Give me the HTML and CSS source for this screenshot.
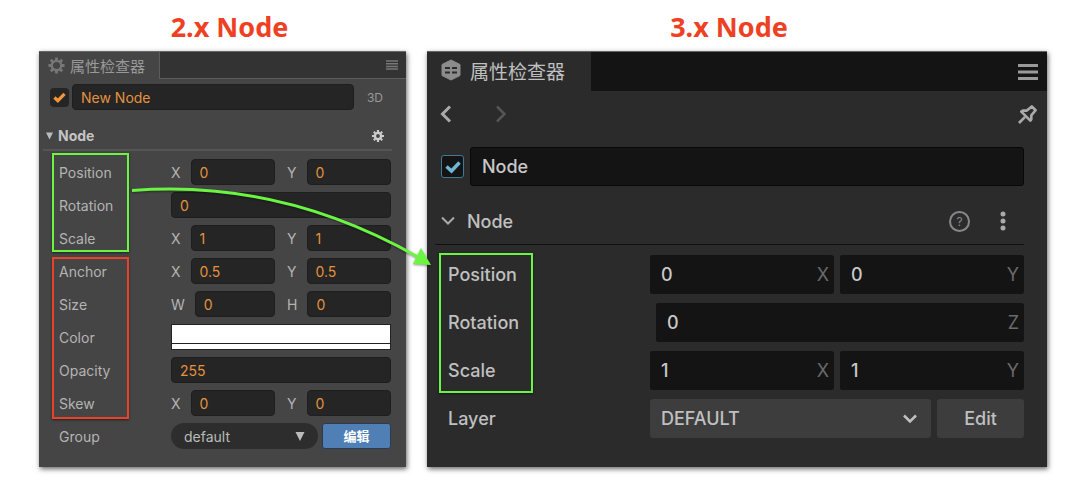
FILE: index.html
```html
<!DOCTYPE html>
<html lang="zh-CN">
<head>
  <meta charset="UTF-8">
  <meta name="viewport" content="width=device-width, initial-scale=1.0">
  <title>2.x Node / 3.x Node</title>
  <link rel="stylesheet" href="styles.css">
</head>
<body>
  <main class="compare">

    <!-- 2.x inspector -->
    <section class="column column-old">
      <h2 class="title">2.x Node</h2>
      <div class="panel panel-old">
        <div class="tab-bar">
          <div class="tab">
            <svg class="tab-icon" viewBox="0 0 18 18" fill="none" stroke="currentColor">
              <circle cx="9" cy="9" r="5" stroke-width="2.4"/>
              <path d="M9 .5v3M9 14.5v3M.5 9h3M14.5 9h3M3 3l2.100 2.100M12.900 12.900L15 15M3 15l2.100-2.100M12.900 5.100L15 3" stroke-width="3"/>
            </svg>
            <span>属性检查器</span>
          </div>
          <button class="icon-btn menu-btn" aria-label="Menu">
            <svg viewBox="0 0 12 10" fill="none" stroke="currentColor" stroke-width="1.500"><path d="M0 1h12M0 3.700h12M0 6.400h12M0 9.100h12"/></svg>
          </button>
        </div>

        <div class="name-row">
          <span class="check">
            <input type="checkbox" checked aria-label="Active">
            <svg viewBox="0 0 14 12" fill="none" stroke="currentColor" stroke-width="3.500"><path d="M1.500 6l3.700 3.500L12.500 2"/></svg>
          </span>
          <input class="field name-field" type="text" value="New Node" aria-label="Name">
          <button class="mode-btn">3D</button>
        </div>

        <div class="section-head">
          <svg class="fold" viewBox="0 0 8 8" fill="currentColor"><path d="M0 0h8L4 8z"/></svg>
          <h3>Node</h3>
          <button class="icon-btn" aria-label="Settings">
            <svg viewBox="0 0 12 12" fill="none" stroke="currentColor">
              <circle cx="6" cy="6" r="3.100" stroke-width="2.400"/>
              <path d="M6 0v2M6 10v2M0 6h2M10 6h2M1.800 1.800l1.400 1.400M8.800 8.800l1.400 1.400M1.800 10.200l1.400-1.400M8.800 3.200l1.400-1.400" stroke-width="2.200"/>
            </svg>
          </button>
        </div>

        <div class="props">
          <div class="group marked marked-green">
            <div class="prop">
              <span class="prop-name">Position</span>
              <label class="axis">X <input class="field" type="text" value="0"></label>
              <label class="axis">Y <input class="field" type="text" value="0"></label>
            </div>
            <div class="prop">
              <label class="prop-name" for="old-rotation">Rotation</label>
              <input class="field" id="old-rotation" type="text" value="0">
            </div>
            <div class="prop">
              <span class="prop-name">Scale</span>
              <label class="axis">X <input class="field" type="text" value="1"></label>
              <label class="axis">Y <input class="field" type="text" value="1"></label>
            </div>
          </div>
          <div class="group marked marked-red">
            <div class="prop">
              <span class="prop-name">Anchor</span>
              <label class="axis">X <input class="field" type="text" value="0.5"></label>
              <label class="axis">Y <input class="field" type="text" value="0.5"></label>
            </div>
            <div class="prop">
              <span class="prop-name">Size</span>
              <label class="axis">W <input class="field" type="text" value="0"></label>
              <label class="axis">H <input class="field" type="text" value="0"></label>
            </div>
            <div class="prop">
              <label class="prop-name" for="old-color">Color</label>
              <div class="color-field">
                <input id="old-color" type="color" value="#ffffff">
                <div class="alpha"></div>
              </div>
            </div>
            <div class="prop">
              <label class="prop-name" for="old-opacity">Opacity</label>
              <input class="field" id="old-opacity" type="text" value="255">
            </div>
            <div class="prop">
              <span class="prop-name">Skew</span>
              <label class="axis">X <input class="field" type="text" value="0"></label>
              <label class="axis">Y <input class="field" type="text" value="0"></label>
            </div>
          </div>
          <div class="group">
            <div class="prop prop-select">
              <label class="prop-name" for="old-group">Group</label>
              <span class="select">
                <select id="old-group"><option>default</option></select>
                <svg viewBox="0 0 10 10" fill="currentColor"><path d="M0 0h10L5 10z"/></svg>
              </span>
              <button class="edit-btn">编辑</button>
            </div>
          </div>
        </div>
      </div>
    </section>

    <!-- 3.x inspector -->
    <section class="column column-new">
      <h2 class="title">3.x Node</h2>
      <div class="panel panel-new">
        <div class="tab-bar">
          <div class="tab">
            <svg class="tab-icon" viewBox="0 0 20 22">
              <path d="M10 1l9 4.500v11L10 21l-9-4.500v-11z" fill="currentColor" stroke="currentColor" stroke-linejoin="round"/>
              <path d="M4 9h5M11 9h5M4 13.500h5M11 13.500h5" stroke="#2b2b2b" stroke-width="2.200"/>
            </svg>
            <span>属性检查器</span>
          </div>
          <button class="icon-btn menu-btn" aria-label="Menu">
            <svg viewBox="0 0 20 18" fill="none" stroke="currentColor" stroke-width="3"><path d="M0 2.500h20M0 9h20M0 15.500h20"/></svg>
          </button>
        </div>

        <div class="nav-row">
          <button class="icon-btn" aria-label="Back">
            <svg viewBox="0 0 12 18" fill="none" stroke="currentColor" stroke-width="3"><path d="M10 1.500L2.500 9l7.500 7.500"/></svg>
          </button>
          <button class="icon-btn forward" aria-label="Forward" disabled>
            <svg viewBox="0 0 12 18" fill="none" stroke="currentColor" stroke-width="2.500"><path d="M2 1.500L9.500 9 2 16.500"/></svg>
          </button>
          <button class="icon-btn pin-btn" aria-label="Lock">
            <svg viewBox="0 0 20 20" fill="none" stroke="currentColor" stroke-width="2.800" stroke-linejoin="round">
              <path d="M1 19l6.500-6.500"/>
              <path d="M3.500 7l9.500 9.500 1-1.500v-4l4.500-5.500-4-4-5.500 4.500H5z"/>
            </svg>
          </button>
        </div>

        <div class="name-row">
          <span class="check">
            <input type="checkbox" checked aria-label="Active">
            <svg viewBox="0 0 16 14" fill="none" stroke="currentColor" stroke-width="3.500"><path d="M1.500 6.500l5 4.500 8-8.500"/></svg>
          </span>
          <input class="field name-field" type="text" value="Node" aria-label="Name">
        </div>

        <div class="section-head">
          <svg class="fold" viewBox="0 0 14 10" fill="none" stroke="currentColor" stroke-width="2"><path d="M1 1.500l6 6 6-6"/></svg>
          <h3>Node</h3>
          <button class="help-btn" aria-label="Help">?</button>
          <button class="icon-btn more-btn" aria-label="More">
            <svg viewBox="0 0 6 20" fill="currentColor"><circle cx="3" cy="3" r="2.500"/><circle cx="3" cy="10" r="2.500"/><circle cx="3" cy="17" r="2.500"/></svg>
          </button>
        </div>

        <div class="props">
          <div class="group marked marked-green">
            <div class="prop">
              <span class="prop-name">Position</span>
              <label class="axis"><input class="field" type="text" value="0"><span>X</span></label>
              <label class="axis"><input class="field" type="text" value="0"><span>Y</span></label>
            </div>
            <div class="prop prop-single">
              <span class="prop-name">Rotation</span>
              <label class="axis"><input class="field" type="text" value="0"><span>Z</span></label>
            </div>
            <div class="prop">
              <span class="prop-name">Scale</span>
              <label class="axis"><input class="field" type="text" value="1"><span>X</span></label>
              <label class="axis"><input class="field" type="text" value="1"><span>Y</span></label>
            </div>
          </div>
          <div class="group">
            <div class="prop">
              <label class="prop-name" for="new-layer">Layer</label>
              <span class="select">
                <select id="new-layer"><option>DEFAULT</option></select>
                <svg viewBox="0 0 14 10" fill="none" stroke="currentColor" stroke-width="2.500"><path d="M1 1.500l6 6 6-6"/></svg>
              </span>
              <button class="edit-btn">Edit</button>
            </div>
          </div>
        </div>
      </div>
    </section>

    <!-- arrow from the old transform group to the new one -->
    <svg class="arrow" viewBox="0 0 300 90" fill="none">
      <path d="M0 15.500C110 7 205 36 286 82" stroke="#6bf542" stroke-width="3"/>
      <path d="M299 90l-10-17-8 16z" fill="#6bf542"/>
    </svg>
  </main>
</body>
</html>
```
FILE: styles.css
```css
*, *::before { box-sizing: border-box; margin: 0; padding: 0; }
body {
  background: #fff;
  font-family: Inter, "Noto Sans CJK SC", sans-serif;
}
button, input, select {
  font: inherit;
  color: inherit;
  background: none;
  border: none;
  outline: none;
}
svg { display: block; }

.compare {
  position: relative;
  display: grid;
  grid-template-columns: 367fr 620fr;
  gap: 21px;
  padding: 0 33px 28px 39px;
}
.column { min-width: 0; }
.title {
  height: 51px;
  padding-top: 9px;
  color: #ee4023;
  font-family: "Noto Sans", sans-serif;
  font-size: 27px;
  line-height: 36px;
  font-weight: 700;
  text-align: center;
}
.column-old .title { padding-left: 14px; }
.column-new .title { padding-right: 16px; }

.panel {
  min-height: 416px;
  border-top: 1px solid #666;
  box-shadow: 1px 2px 5px rgba(0, 0, 0, 0.6);
}
.tab-bar, .tab, .name-row, .nav-row, .section-head {
  display: flex;
  align-items: center;
}
.tab-bar { justify-content: space-between; }
.tab { height: 100%; }
.section-head h3 { flex: 1; }

.field {
  flex: 1;
  min-width: 0;
  width: 100%;
}
.props, .group {
  display: flex;
  flex-direction: column;
}
.prop { display: flex; align-items: center; }
.prop-name { flex: none; }
.axis {
  flex: 1 1 0;
  min-width: 0;
  display: flex;
  align-items: center;
}
.check, .select { position: relative; display: block; }
.check input, .select select {
  appearance: none;
  display: block;
  width: 100%;
  height: 100%;
}
.check svg, .select svg { position: absolute; pointer-events: none; }
.select { flex: 1; }

/* highlight frames */
.marked { position: relative; }
.marked::before {
  content: "";
  position: absolute;
  border: 2px solid #6bf542;
  box-shadow: 0 1px 2px rgba(0, 0, 0, 0.5);
  pointer-events: none;
}
.marked-red::before { border-color: #e8432a; }

.arrow {
  position: absolute;
  left: 132px;
  top: 175px;
  width: 300px;
  height: 90px;
  pointer-events: none;
  filter: drop-shadow(0 1px 1px rgba(0, 0, 0, 0.4));
}

/* 2.x */
.panel-old {
  background: #454545;
  color: #b4b4b4;
  font-size: 14px;
}
.panel-old .tab-bar {
  height: 27px;
  padding-right: 8px;
  background: #333;
  border-bottom: 1px solid #5c5c5c;
}
.panel-old .tab {
  height: 27px;
  gap: 5px;
  padding: 0 14px 0 9px;
  background: #454545;
  border-right: 1px solid #5c5c5c;
  color: #999;
  font-size: 15px;
}
.panel-old .tab-icon { width: 17px; height: 17px; color: #777; }
.panel-old .menu-btn { color: #777; }
.panel-old .icon-btn svg { width: 12px; height: 12px; }
.panel-old .field {
  height: 26px;
  padding: 0 8px;
  background: #252525;
  border: 1px solid #1e1e1e;
  border-radius: 4px;
  color: #e4923f;
}
.panel-old .name-row { padding: 5px 14px 0 11px; }
.panel-old .check {
  width: 19px;
  height: 19px;
  margin-right: 3px;
  background: #252525;
  border-radius: 4px;
  color: #f2953a;
}
.panel-old .check svg { left: 3px; top: 4px; width: 13px; height: 11px; }
.mode-btn { width: 38px; padding-left: 4px; font-size: 12px; color: #999; }
.panel-old .section-head {
  height: 41px;
  margin: 0 14px 0 4px;
  padding: 12px 8px 0 3px;
  gap: 5px;
  border-bottom: 2px solid #555;
}
.panel-old .section-head h3 { font-size: 14px; color: #c4c4c4; }
.panel-old .fold { width: 7px; height: 8px; color: #bbb; }
.panel-old .section-head .icon-btn { color: #ccc; }
.panel-old .props { padding: 8px 15px 0 20px; }
.panel-old .props, .panel-old .group { gap: 7px; }
.panel-old .prop { gap: 12px; height: 26px; }
.panel-old .prop-name { width: 100px; }
.panel-old .axis { gap: 10px; }
.panel-old .marked::before { left: -7px; width: 77px; }
.panel-old .marked-green::before { top: -6px; bottom: -1px; }
.panel-old .marked-red::before { top: -1px; bottom: -3px; }
.color-field {
  flex: 1;
  display: flex;
  flex-direction: column;
  height: 26px;
  border: 1px solid #222;
}
.color-field input { display: block; width: 100%; flex: 1; min-height: 0; }
.color-field input::-webkit-color-swatch-wrapper { padding: 0; }
.color-field input::-webkit-color-swatch { border: none; }
.alpha { height: 6px; background: #fff; border-top: 1px solid #222; }
.panel-old .select {
  height: 26px;
  background: #2d2d2d;
  border-radius: 13px;
  color: #bbb;
}
.panel-old .select select { padding-left: 13px; }
.panel-old .select svg { right: 13px; top: 9px; width: 10px; height: 9px; }
.panel-old .prop-select .select { margin-right: -8px; }
.panel-old .edit-btn {
  width: 69px;
  height: 26px;
  background: #4f7fb5;
  border: 1px solid #2b3c50;
  border-radius: 3px;
  color: #fff;
  font-size: 13px;
  line-height: 22px;
  font-weight: 700;
}

/* 3.x */
.panel-new {
  background: #2b2b2b;
  color: #c0c0c0;
  font-size: 18px;
}
.panel-new .props, .panel-new .name-field { font-weight: 500; }
.panel-new .tab-bar { height: 39px; background: #141414; padding-right: 9px; }
.panel-new .tab {
  gap: 9px;
  padding: 0 26px 3px 14px;
  background: #2b2b2b;
  font-size: 19px;
}
.panel-new .tab-icon { width: 20px; height: 22px; color: #8c8c8c; }
.panel-new .menu-btn { color: #999; }
.panel-new .menu-btn svg { width: 20px; height: 18px; }
.nav-row { height: 46px; padding: 0 10px 0 13px; gap: 43px; }
.nav-row svg { width: 12px; height: 18px; }
.nav-row .icon-btn { color: #aaa; }
.nav-row .forward { color: #555; }
.nav-row .pin-btn { margin-left: auto; }
.nav-row .pin-btn svg { width: 19px; height: 19px; }
.panel-new .field {
  height: 39px;
  padding: 0 11px;
  background: #141414;
  border-radius: 3px;
  color: #c8c8c8;
}
.panel-new .name-row { padding: 10px 23px 0 14px; gap: 6px; }
.panel-new .name-field { border: 1px solid #080808; }
.panel-new .check {
  width: 23px;
  height: 23px;
  background: #141414;
  border: 1px solid #3f7b94;
  border-radius: 3px;
  color: #6fb5d5;
}
.panel-new .check svg { left: 3px; top: 4px; width: 16px; height: 14px; }
.panel-new .section-head {
  height: 59px;
  margin: 0 23px 0 8px;
  padding: 12px 18px 0 6px;
  gap: 12px;
  border-bottom: 1px solid #111;
}
.panel-new .section-head h3 { font-size: 18px; font-weight: 500; }
.panel-new .fold { width: 14px; height: 10px; color: #aaa; }
.help-btn {
  width: 21px;
  height: 21px;
  border: 2px solid #888;
  border-radius: 50%;
  color: #888;
  font-size: 12px;
  line-height: 17px;
}
.more-btn { margin-left: 18px; color: #aaa; }
.more-btn svg { width: 6px; height: 20px; }
.panel-new .props { padding: 10px 23px 0 21px; }
.panel-new .props, .panel-new .group { gap: 9px; }
.panel-new .prop { gap: 6px; height: 39px; }
.panel-new .prop-name { width: 196px; }
.panel-new .prop-single .axis { margin-left: 6px; }
.panel-new .axis {
  background: #141414;
  border-radius: 3px;
  padding-right: 5px;
}
.panel-new .axis span { color: #6a6a6a; font-weight: 400; }
.panel-new .marked::before { left: -9px; width: 94px; top: -2px; bottom: -3px; }
.panel-new .select, .panel-new .edit-btn {
  height: 39px;
  background: #3d3d3d;
  border-radius: 3px;
}
.panel-new .select select { padding-left: 11px; }
.panel-new .select svg { right: 14px; top: 15px; width: 14px; height: 10px; }
.panel-new .edit-btn { width: 87px; }
```
